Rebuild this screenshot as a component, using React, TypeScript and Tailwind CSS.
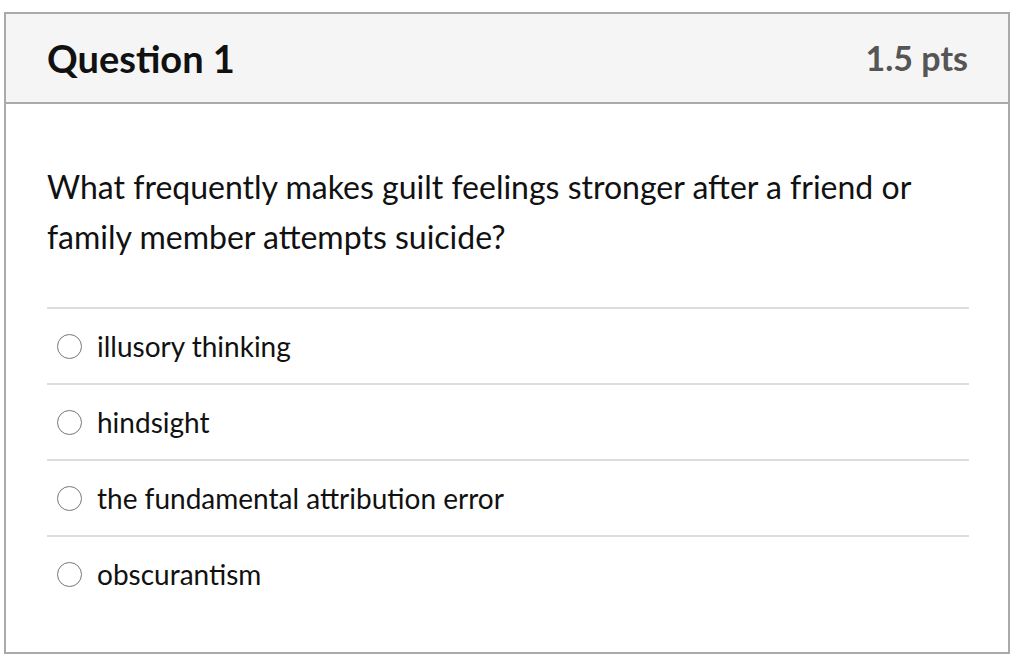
import React from 'react';

const options = ['illusory thinking', 'hindsight', 'the fundamental attribution error', 'obscurantism'];

const App: React.FC = () => {
    return (
        <div className="w-[1016px] h-[672px] bg-white pt-[12px] pl-[4px] font-['Lato',sans-serif]">
            <div className="w-[1006px] h-[642px] border-2 border-[#aaaaaa] flex flex-col">
                {/* Header */}
                <div className="h-[90px] bg-[#f5f5f5] border-b-2 border-[#aaaaaa] flex items-center justify-between pl-[41px] pr-[40px]">
                    <h2 className="text-[38px] font-bold text-[#111111] leading-none">Question 1</h2>
                    <span className="text-[34px] font-bold text-[#555555] leading-none">1.5 pts</span>
                </div>

                {/* Body */}
                <div className="pl-[41px] pr-[39px] pt-[58px]">
                    <p className="text-[32px] leading-[50px] text-[#111111]">
                        What frequently makes guilt feelings stronger after a friend or family member attempts suicide?
                    </p>

                    <div className="mt-[45px]">
                        {options.map((opt) => (
                            <label key={opt} className="h-[76px] border-t-2 border-[#dddddd] flex items-center gap-[15px] pl-[10px]">
                                <span className="w-[25px] h-[25px] rounded-full border-[1.5px] border-[#777777] bg-white shrink-0" />
                                <span className="text-[28px] text-[#111111]">{opt}</span>
                            </label>
                        ))}
                    </div>
                </div>
            </div>
        </div>
    );
};

export default App;
